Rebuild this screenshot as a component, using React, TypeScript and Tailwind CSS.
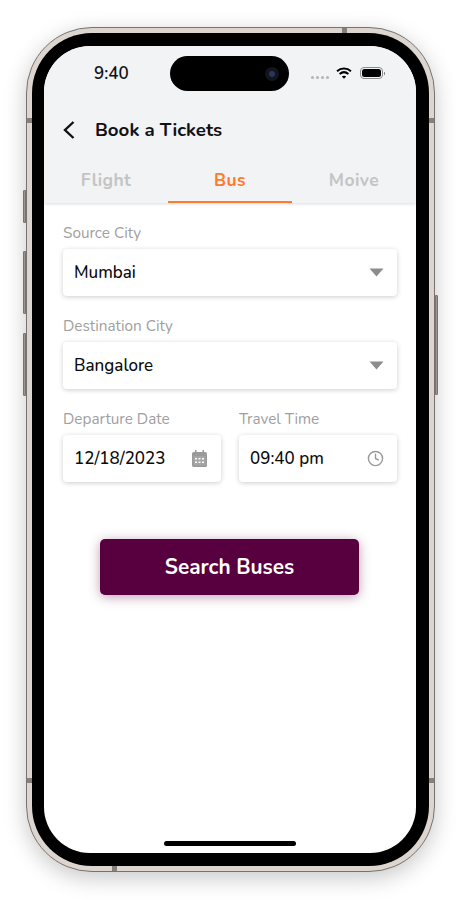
import { Clock } from 'lucide-react'

const font = "font-['Nunito','Noto_Sans','Open_Sans',sans-serif]"

function Caret() {
  return (
    <svg width="15" height="9" viewBox="0 0 15 9" className="shrink-0">
      <path d="M0.5 0.5h14L7.5 8.5z" fill="#8c8c8c" />
    </svg>
  )
}

function CalendarIcon() {
  return (
    <svg width="15" height="17" viewBox="0 0 15 17" className="mr-[1px] shrink-0">
      <path d="M3 0h1.5v2h6V0H12v2h1.2C14.2 2 15 2.8 15 3.8v11.4c0 1-.8 1.8-1.8 1.8H1.8C.8 17 0 16.200 0 15.200V3.800C0 2.800.8 2 1.800 2H3z" fill="#9a9a9a" />
      <rect x="1.500" y="6" width="12" height="9.500" fill="#a5a5a5" />
      <g fill="#ffffff">
        <rect x="3" y="8" width="2" height="1.500" />
        <rect x="6.500" y="8" width="2" height="1.500" />
        <rect x="10" y="8" width="2" height="1.500" />
        <rect x="3" y="11.500" width="2" height="1.500" />
        <rect x="6.500" y="11.500" width="2" height="1.500" />
        <rect x="10" y="11.500" width="2" height="1.500" />
      </g>
    </svg>
  )
}

function Field({ label, value, icon, grow }: { label: string; value: string; icon: React.ReactNode; grow?: boolean }) {
  return (
    <div className={grow ? 'w-full' : 'w-[158px]'}>
      <div className="h-[18px] text-[15.300px] leading-[18px] text-[#a0a0a0]">{label}</div>
      <div className="mt-[7px] flex h-[47px] items-center justify-between rounded-[4px] bg-white pl-[11px] pr-[13px] shadow-[0_1px_5px_rgba(0,0,0,0.2)]">
        <span className="text-[17px] font-medium text-[#0a0a0a]">{value}</span>
        {icon}
      </div>
    </div>
  )
}

function Tab({ label, active }: { label: string; active?: boolean }) {
  return (
    <div
      className={
        'flex h-[39px] w-[124px] items-center justify-center border-b-2 pb-[4px] text-[17.500px] font-bold tracking-[0.4px] ' +
        (active ? 'border-[#ff7a2b] text-[#ff7a2b]' : 'border-transparent text-[#c4c4c4]')
      }
    >
      {label}
    </div>
  )
}

function StatusBar() {
  return (
    <div className="flex h-[45px] items-start pt-[10px]">
      <div className="ml-[50px] mt-[8px] w-[76px] text-[17px] font-semibold leading-[20px] text-[#111]">9:40</div>
      <div className="flex h-[35px] w-[119px] items-center justify-end rounded-full bg-black pr-[10px]">
        <div className="flex h-[14px] w-[14px] items-center justify-center rounded-full bg-[#14141c]">
          <div className="h-[6px] w-[6px] rounded-full bg-[#27355f]" />
        </div>
      </div>
      <div className="ml-[22px] mt-[11px] flex items-center">
        <div className="mt-[8px] flex gap-[2px]">
          <div className="h-[3px] w-[3px] rounded-full bg-[#b5b5b5]" />
          <div className="h-[3px] w-[3px] rounded-full bg-[#b5b5b5]" />
          <div className="h-[3px] w-[3px] rounded-full bg-[#b5b5b5]" />
          <div className="h-[3px] w-[3px] rounded-full bg-[#b5b5b5]" />
        </div>
        <svg width="16" height="12" viewBox="0 0 16 12" className="ml-[7px]" fill="none" stroke="#000" strokeWidth="2">
          <path d="M1 4.200C5 .6 11 .6 15 4.200" />
          <path d="M3.600 7C6.200 4.800 9.800 4.800 12.400 7" />
          <path d="M8 11.800L5.800 9.400C7 8.400 9 8.400 10.200 9.400z" fill="#000" stroke="none" />
        </svg>
        <div className="ml-[8px] flex items-center">
          <div className="h-[12px] w-[23px] rounded-[4px] border border-[#8a8a8a] p-[1px]">
            <div className="h-full w-full rounded-[2.500px] bg-black" />
          </div>
          <div className="ml-[1px] h-[3px] w-[1px] bg-[#8a8a8a]" />
        </div>
      </div>
    </div>
  )
}

function Notch({ className }: { className: string }) {
  return <div className={'absolute bg-[#85807c] ' + className} />
}

export default function App() {
  return (
    <div className={'h-[900px] w-[460px] overflow-hidden bg-white pl-[26px] pt-[27px] ' + font}>
      <div className="relative h-[845px] w-[409px] rounded-[66px] border border-[#77736f] bg-[#ddd6d0] p-[5px] shadow-[0_6px_22px_rgba(0,0,0,0.22)]">
        <Notch className="left-[315px] top-0 h-[5px] w-[5px]" />
        <Notch className="bottom-0 left-[85px] h-[5px] w-[5px]" />
        <Notch className="left-0 top-[90px] h-[5px] w-[5px]" />
        <Notch className="right-0 top-[90px] h-[5px] w-[5px]" />
        <Notch className="bottom-[88px] left-0 h-[5px] w-[5px]" />
        <Notch className="bottom-[88px] right-0 h-[5px] w-[5px]" />

        <div className="absolute left-[-4px] top-[162px] h-[33px] w-[3px] rounded-l-[1px] border border-[#77736f] bg-[#9b9692]" />
        <div className="absolute left-[-4px] top-[223px] h-[63px] w-[3px] rounded-l-[1px] border border-[#77736f] bg-[#9b9692]" />
        <div className="absolute left-[-4px] top-[305px] h-[63px] w-[3px] rounded-l-[1px] border border-[#77736f] bg-[#9b9692]" />
        <div className="absolute right-[-4px] top-[267px] h-[100px] w-[3px] rounded-r-[1px] border border-[#77736f] bg-[#9b9692]" />

        <div className="h-full w-full rounded-[60px] bg-black px-[12px] py-[13px]">
          <div className="relative flex h-[807px] w-[372px] flex-col overflow-hidden rounded-[46px] bg-white">
            <div className="bg-[#f2f3f5] shadow-[0_1px_3px_rgba(0,0,0,0.14)]">
              <StatusBar />
              <div className="mt-[24px] flex h-[30px] items-center pl-[19px]">
                <svg width="12" height="18" viewBox="0 0 12 18" fill="none" stroke="#111" strokeWidth="2.400">
                  <path d="M10.500 1L2 9l8.500 8" />
                </svg>
                <span className="ml-[20px] text-[18.700px] font-bold text-[#111]">Book a Tickets</span>
              </div>
              <div className="mt-[19px] flex">
                <Tab label="Flight" />
                <Tab label="Bus" active />
                <Tab label="Moive" />
              </div>
            </div>

            <div className="mx-[19px] mt-[21px] flex flex-col gap-[21px]">
              <Field label="Source City" value="Mumbai" icon={<Caret />} grow />
              <Field label="Destination City" value="Bangalore" icon={<Caret />} grow />
              <div className="flex justify-between">
                <Field label="Departure Date" value="12/18/2023" icon={<CalendarIcon />} />
                <Field label="Travel Time" value="09:40 pm" icon={<Clock size={17} color="#9a9a9a" strokeWidth={2} />} />
              </div>
            </div>

            <div className="ml-[56px] mt-[57px] flex h-[56px] w-[259px] items-center justify-center rounded-[5px] bg-[#58003f] pt-[1px] text-[20.800px] font-bold text-white shadow-[0_2px_12px_rgba(88,0,63,0.38)]">
              Search Buses
            </div>

            <div className="absolute bottom-[7px] left-[120px] h-[5px] w-[132px] rounded-full bg-black" />
          </div>
        </div>
      </div>
    </div>
  )
}
